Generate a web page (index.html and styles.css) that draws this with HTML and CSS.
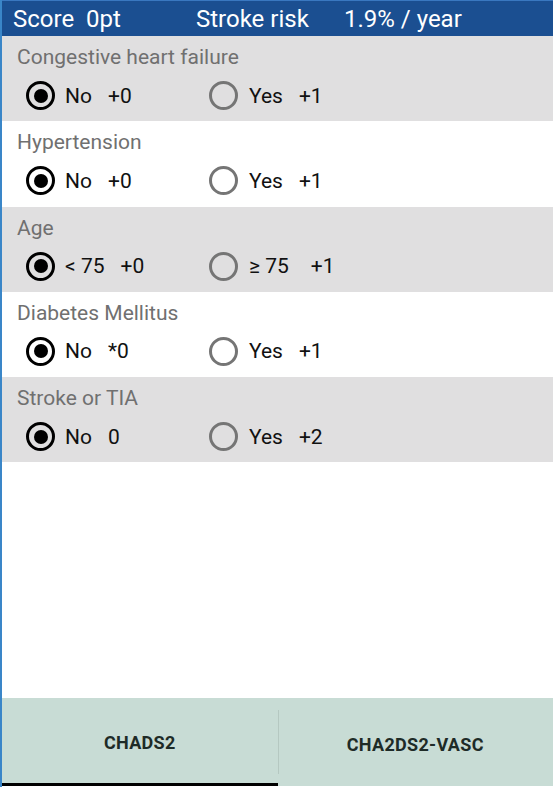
FILE: index.html
```html
<!DOCTYPE html>
<html lang="en">
<head>
  <meta charset="UTF-8" />
  <meta name="viewport" content="width=device-width, initial-scale=1.0"/>
  <title>CHADS2</title>
  <link rel="stylesheet" href="styles.css">
</head>
<body>
  <div class="app">
    <div class="header">
      <span class="score">Score&nbsp;&nbsp;0pt</span>
      <span class="risk">Stroke risk</span>
      <span class="rate">1.9% / year</span>
    </div>

    <div class="items">
      <div class="item gray">
        <div class="item-title">Congestive heart failure</div>
        <div class="options">
          <div class="option"><span class="radio checked"></span><span class="opt-text">No</span><span class="opt-pt">+0</span></div>
          <div class="option"><span class="radio"></span><span class="opt-text">Yes</span><span class="opt-pt">+1</span></div>
        </div>
      </div>

      <div class="item">
        <div class="item-title">Hypertension</div>
        <div class="options">
          <div class="option"><span class="radio checked"></span><span class="opt-text">No</span><span class="opt-pt">+0</span></div>
          <div class="option"><span class="radio"></span><span class="opt-text">Yes</span><span class="opt-pt">+1</span></div>
        </div>
      </div>

      <div class="item gray">
        <div class="item-title">Age</div>
        <div class="options">
          <div class="option"><span class="radio checked"></span><span class="opt-text">&lt; 75</span><span class="opt-pt">+0</span></div>
          <div class="option"><span class="radio"></span><span class="opt-text">≥ 75</span><span class="opt-pt wide">+1</span></div>
        </div>
      </div>

      <div class="item">
        <div class="item-title">Diabetes Mellitus</div>
        <div class="options">
          <div class="option"><span class="radio checked"></span><span class="opt-text">No</span><span class="opt-pt">*0</span></div>
          <div class="option"><span class="radio"></span><span class="opt-text">Yes</span><span class="opt-pt">+1</span></div>
        </div>
      </div>

      <div class="item gray">
        <div class="item-title">Stroke or TIA</div>
        <div class="options">
          <div class="option"><span class="radio checked"></span><span class="opt-text">No</span><span class="opt-pt">0</span></div>
          <div class="option"><span class="radio"></span><span class="opt-text">Yes</span><span class="opt-pt">+2</span></div>
        </div>
      </div>
    </div>

    <div class="tabs">
      <div class="tab active">CHADS2</div>
      <div class="tab">CHA2DS2-VASC</div>
    </div>
  </div>
</body>
</html>
```

FILE: styles.css
```css
html, body {
  margin: 0;
  padding: 0;
  background: #fff;
}

body {
  font-family: Roboto, 'Noto Sans', sans-serif;
  color: #111;
}

.app {
  width: 553px;
  height: 787px;
  display: flex;
  flex-direction: column;
  border-left: 2px solid #3a86c8;
  box-sizing: border-box;
}

.header {
  height: 36px;
  box-sizing: border-box;
  border-top: 1px solid #3a78c0;
  background: #1b4f91;
  color: #fff;
  font-size: 24px;
  display: flex;
  align-items: center;
  padding-left: 11px;
  line-height: 1;
}

.score {
  width: 183px;
}

.risk {
  width: 148px;
}

.items {
  flex: 1;
}

.item {
  height: 85.3px;
  box-sizing: border-box;
  padding: 9px 0 0 15px;
}

.item.gray {
  background: #e0dfe0;
}

.item-title {
  font-size: 21px;
  color: #707070;
  line-height: 24px;
}

.options {
  display: flex;
  margin-top: 12px;
}

.option {
  width: 183px;
  display: flex;
  align-items: center;
  font-size: 21px;
  color: #111;
  margin-left: 9px;
}

.option + .option {
  margin-left: 0;
}

.radio {
  width: 29px;
  height: 29px;
  border-radius: 50%;
  border: 3px solid #757575;
  box-sizing: border-box;
  display: flex;
  align-items: center;
  justify-content: center;
  margin-right: 11px;
}

.radio.checked {
  border: 3.5px solid #000;
  margin-right: 10px;
}

.radio.checked::after {
  content: "";
  width: 14px;
  height: 14px;
  border-radius: 50%;
  background: #000;
}

.opt-pt {
  margin-left: 16px;
}

.opt-pt.wide {
  margin-left: 22px;
}

.tabs {
  height: 88px;
  background: #c8dcd5;
  display: flex;
  border-bottom: 1px solid #fff;
}

.tab {
  flex: 1;
  display: flex;
  align-items: center;
  justify-content: center;
  font-size: 18px;
  font-weight: bold;
  letter-spacing: 0.3px;
  color: #1e2b27;
  position: relative;
  box-sizing: border-box;
  padding-top: 4px;
}

.tab + .tab::before {
  content: "";
  position: absolute;
  left: 0;
  top: 12px;
  bottom: 12px;
  width: 1px;
  background: #b5c8c1;
}

.tab.active {
  border-bottom: 3px solid #000;
}
```
